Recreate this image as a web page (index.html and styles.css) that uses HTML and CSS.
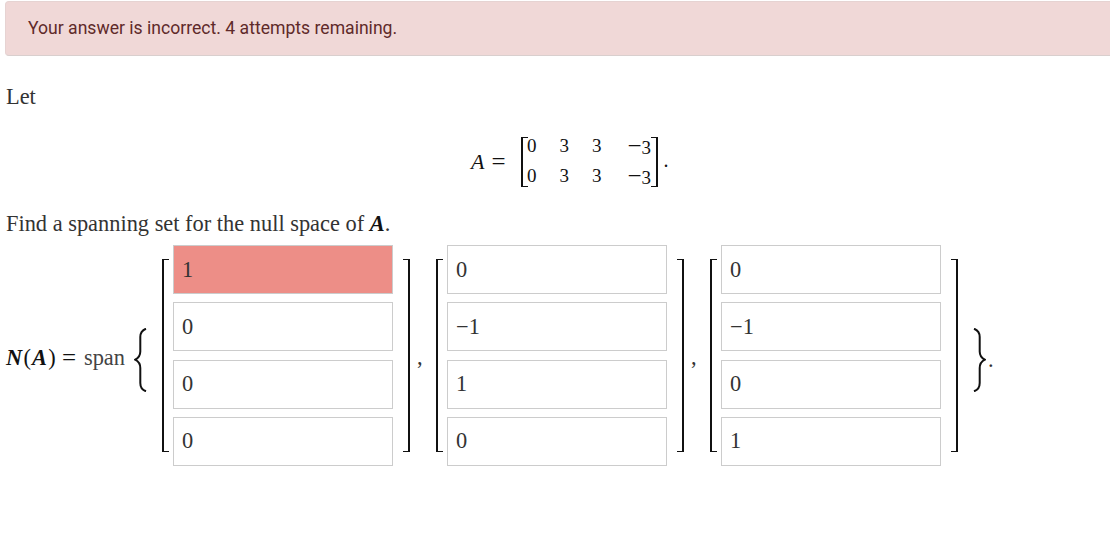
FILE: index.html
```html
<!DOCTYPE html>
<html lang="en">
<head>
  <meta charset="UTF-8">
  <title>Null space problem</title>
  <link rel="stylesheet" href="styles.css">
</head>
<body>
  <div class="alert">Your answer is incorrect. 4 attempts remaining.</div>

  <div class="problem">
    <p class="let">Let</p>

    <div class="display">
      <span class="math-a">A</span>
      <span class="equals">=</span>
      <div class="matrix">
        <span class="bracket left"></span>
        <div class="matrix-grid">
          <span>0</span><span>3</span><span>3</span><span><span class="minus">−</span>3</span>
          <span>0</span><span>3</span><span>3</span><span><span class="minus">−</span>3</span>
        </div>
        <span class="bracket right"></span>
      </div>
      <span class="period">.</span>
    </div>

    <p class="find">Find a spanning set for the null space of <b><i>A</i></b>.</p>

    <div class="answer">
      <div class="label"><span class="na"><b><i>N</i></b>(<b><i>A</i></b>)</span><span class="eq">=</span><span class="span-word">span</span></div>
      <svg class="brace" viewBox="0 0 13 64"><path d="M12 .7C8.4 2 6.3 4.2 6.3 9V23.5C6.3 27 4.4 30 1.2 31.7 4.4 33.4 6.3 36.4 6.3 40V55C6.3 59.8 8.4 62 12 63.3"/></svg>

      <div class="vector">
        <span class="bracket left"></span>
        <div class="cells">
          <input class="wrong" type="text" value="1">
          <input type="text" value="0">
          <input type="text" value="0">
          <input type="text" value="0">
        </div>
        <span class="bracket right"></span>
      </div>
      <span class="comma">,</span>
      <div class="vector">
        <span class="bracket left"></span>
        <div class="cells">
          <input type="text" value="0">
          <input type="text" value="−1">
          <input type="text" value="1">
          <input type="text" value="0">
        </div>
        <span class="bracket right"></span>
      </div>
      <span class="comma">,</span>
      <div class="vector">
        <span class="bracket left"></span>
        <div class="cells">
          <input type="text" value="0">
          <input type="text" value="−1">
          <input type="text" value="0">
          <input type="text" value="1">
        </div>
        <span class="bracket right"></span>
      </div>

      <svg class="brace flip" viewBox="0 0 13 64"><path d="M12 .7C8.4 2 6.3 4.2 6.3 9V23.5C6.3 27 4.4 30 1.2 31.7 4.4 33.4 6.3 36.4 6.3 40V55C6.3 59.8 8.4 62 12 63.3"/></svg>
      <span class="end-dot">.</span>
    </div>
  </div>
</body>
</html>
```

FILE: styles.css
```css
* { box-sizing: border-box; }
html, body { margin: 0; padding: 0; }
body { width: 1110px; height: 550px; overflow: hidden; background: #fff; color: #333; font-family: "Liberation Serif", serif; font-size: 22.4px; }

.alert { height: 55px; margin: 1px -10px 0 5px; padding: 0 22px 2px; display: flex; align-items: center; background: #f0d8d7; border: 1px solid #e6d3d2; border-bottom-color: #d9cfce; border-radius: 4px; color: #5f2a2a; font-family: Roboto, sans-serif; font-size: 17.6px; }

.problem { padding-left: 6px; }
.let { margin: 29px 0 0; line-height: 24px; }
.find { margin: 0; line-height: 24px; }
.find b, .label b { color: #111; }

.display { height: 50px; margin-top: 28px; margin-bottom: 25px; padding-left: 465px; display: flex; align-items: center; color: #111; }
.math-a { font-style: italic; font-size: 22px; margin-right: 7px; }
.equals { font-size: 25px; margin-right: 15px; }
.period { font-size: 20px; margin-left: 6px; margin-top: -4px; }
.matrix { display: flex; height: 50px; }
.matrix-grid { display: grid; grid-template-columns: 10px 10px 10px 27px; column-gap: 22.5px; grid-auto-rows: 30px; align-content: center; margin: 0 -.5px 0 -1px; padding-bottom: 2px; text-align: right; font-size: 19px; line-height: 30px; }
.minus { font-size: 25px; }

.bracket { display: block; width: 7px; flex: none; border: 0 solid #111; border-width: 1px 0; }
.bracket.left { border-left-width: 2px; }
.bracket.right { border-right-width: 2px; }

.answer { display: flex; align-items: center; height: 221px; margin-top: 9px; }
.label { width: 119px; margin-top: 5px; display: flex; white-space: nowrap; }
.na { width: 50px; letter-spacing: 1.2px; color: #111; }
.eq { width: 35px; padding-left: 6px; font-size: 25px; line-height: 25px; color: #111; }
.span-word { color: #444; }
.brace { width: 13px; height: 64px; margin-left: 9px; margin-top: 8px; flex: none; }
.brace path { fill: none; stroke: #111; stroke-width: 2; }
.brace.flip { transform: scaleX(-1); margin-left: 15px; }

.vector { display: flex; height: 221px; margin-left: 15px; }
.vector .bracket { margin: 14px 0; }
.cells { display: grid; grid-auto-rows: 49px; row-gap: 8.33px; margin: 0 10px 0 4px; }
.cells input { width: 220px; height: 49px; padding: 0 8px; border: 1px solid #ccc; border-radius: 0; background: #fff; color: #333; font-family: "Liberation Serif", serif; font-size: 22.4px; outline: none; }
.cells input.wrong { background: #ed8e87; }

.comma { width: 10px; margin-left: 7px; margin-right: 2px; margin-top: 2px; }
.vector + .comma + .vector { margin-left: 7px; }
.end-dot { margin-left: 2px; margin-top: 8px; }
```
